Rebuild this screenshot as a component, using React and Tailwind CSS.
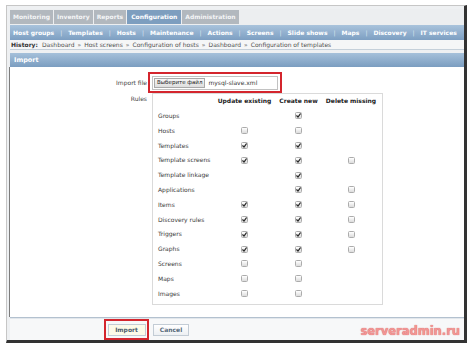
import React from "react";

const topMenu = ["Monitoring", "Inventory", "Reports", "Configuration", "Administration"];
const subMenu = [
  "Host groups",
  "Templates",
  "Hosts",
  "Maintenance",
  "Actions",
  "Screens",
  "Slide shows",
  "Maps",
  "Discovery",
  "IT services",
];
const history = ["Dashboard", "Host screens", "Configuration of hosts", "Dashboard", "Configuration of templates"];

// [name, update existing, create new, delete missing] - null means no checkbox
const rules = [
  ["Groups", null, true, null],
  ["Hosts", false, false, null],
  ["Templates", true, true, null],
  ["Template screens", true, true, false],
  ["Template linkage", null, true, null],
  ["Applications", null, true, false],
  ["Items", true, true, false],
  ["Discovery rules", true, true, false],
  ["Triggers", true, true, false],
  ["Graphs", true, true, false],
  ["Screens", false, false, null],
  ["Maps", false, false, null],
  ["Images", false, false, null],
];

function Check({ value }) {
  if (value === null) return <span />;
  return (
    <span className="flex h-[7px] w-[7px] items-center justify-center justify-self-center rounded-[1.5px] border border-[#acacac] bg-linear-to-b from-white to-[#dcdcdc]">
      {value && (
        <svg width="5" height="5" viewBox="0 0 10 10">
          <path
            d="M1.5 5.5 L4 8.2 L8.6 1.6"
            fill="none"
            stroke="#262626"
            strokeWidth="2.3"
            strokeLinecap="round"
            strokeLinejoin="round"
          />
        </svg>
      )}
    </span>
  );
}

function App() {
  return (
    <div className="h-[348px] w-[474px] bg-white pl-[6px] pt-[5px] font-['DejaVu_Sans',sans-serif] leading-none">
      <div className="flex h-[338px] w-[461px] flex-col border-l border-t border-[#c6c6c6] border-r-[3px] border-b-[3px] border-r-[#333] border-b-[#333] bg-[#eef0f2] pl-[3px] pt-[3px]">
        {/* top menu */}
        <div className="flex h-[16px] gap-[1px] bg-[#eceef0] py-[1px]">
          {topMenu.map((m) =>
            m === "Configuration" ? (
              <div key={m} className="flex items-center bg-[#7d9ebf] px-[4px] text-[6px] font-bold text-white">
                {m}
              </div>
            ) : (
              <div key={m} className="flex items-center bg-[#b2b8be] px-[3px] text-[6px] font-bold text-[#f4f5f6]">
                {m}
              </div>
            )
          )}
        </div>

        {/* sub menu */}
        <div className="flex h-[15px] items-center bg-linear-to-b from-[#a9c3dc] to-[#7d9fc2] pl-[3px] text-[6px] font-bold text-white">
          {subMenu.map((s, i) => (
            <React.Fragment key={s}>
              {i > 0 && <span className="px-[6px] font-normal text-[#dbe6f1]">|</span>}
              <span>{s}</span>
            </React.Fragment>
          ))}
        </div>

        {/* history */}
        <div className="flex h-[10px] items-center border-b border-[#c5d0da] bg-[#f5f6f7] pl-[1px] text-[6px] text-[#505050]">
          <span className="mr-[4px] font-bold text-[#333]">History:</span>
          {history.map((h, i) => (
            <React.Fragment key={i}>
              {i > 0 && <span className="px-[3px]">»</span>}
              <span>{h}</span>
            </React.Fragment>
          ))}
        </div>

        <div className="h-[3px]" />

        {/* form header */}
        <div className="flex h-[14px] items-center bg-linear-to-b from-[#a5c0da] to-[#7b9dc0] pl-[4px] text-[6.5px] font-bold text-white">
          Import
        </div>

        {/* form body */}
        <div className="-ml-[1px] flex h-[250px] border-l border-[#7c7c7c] bg-white pt-[5px]">
          <div className="flex w-[138px] flex-col items-end pr-[1px] text-[6px] text-[#444]">
            <div className="flex h-[21px] items-center">Import file</div>
            <div className="mt-[3px]">Rules</div>
          </div>
          <div className="flex flex-col">
            <div className="flex h-[21px] w-[134px] items-center border-2 border-[#d4252d] px-[2px]">
              <div className="flex h-[14px] w-[126px] items-center border border-[#c2c2c2] bg-white pl-[1px]">
                <span className="flex h-[10px] items-center border border-[#a9a9a9] bg-linear-to-b from-[#f6f6f6] to-[#dedede] px-[2px] text-[5.5px] text-[#222]">
                  Выберите файл
                </span>
                <span className="ml-[3px] text-[6px] text-[#333]">mysql-slave.xml</span>
              </div>
            </div>
            <div className="ml-[4px] h-[212px] w-[231px] border border-[#dadada] pl-[5px]">
              <div className="grid h-[14.6px] grid-cols-[59px_55px_53px_52px] items-center text-center text-[6px] font-bold text-[#222]">
                <span />
                <span>Update existing</span>
                <span>Create new</span>
                <span>Delete missing</span>
              </div>
              {rules.map(([name, upd, create, del]) => (
                <div
                  key={name}
                  className="grid h-[14.8px] grid-cols-[59px_55px_53px_52px] items-center text-[6px] text-[#3a3a3a]"
                >
                  <span>{name}</span>
                  <Check value={upd} />
                  <Check value={create} />
                  <Check value={del} />
                </div>
              ))}
            </div>
          </div>
        </div>

        {/* footer */}
        <div className="h-[1px] bg-[#b3c1cf]" />
        <div className="h-[1px] bg-[#e2e7ec]" />
        <div className="flex h-[21px] items-center bg-[#f7f8f9] pl-[94px]">
          <div className="flex h-[21px] w-[45px] items-center justify-center border-2 border-[#d4252d]">
            <span className="flex h-[12px] w-[38px] items-center justify-center border border-[#c3ccd5] bg-[#fcfae8] text-[6px] font-bold text-[#4a5a6b]">
              Import
            </span>
          </div>
          <span className="ml-[4px] flex h-[12px] w-[36px] items-center justify-center border border-[#c3ccd5] bg-linear-to-b from-white to-[#edf0f3] text-[6px] font-bold text-[#566879]">
            Cancel
          </span>
          <span className="ml-auto mr-[4px] mt-[4px] text-[11.5px] font-bold text-[#f29595] [text-shadow:0_0_1px_#cc4a4a]">
            serveradmin.ru
          </span>
        </div>
      </div>
    </div>
  );
}

export default App;
